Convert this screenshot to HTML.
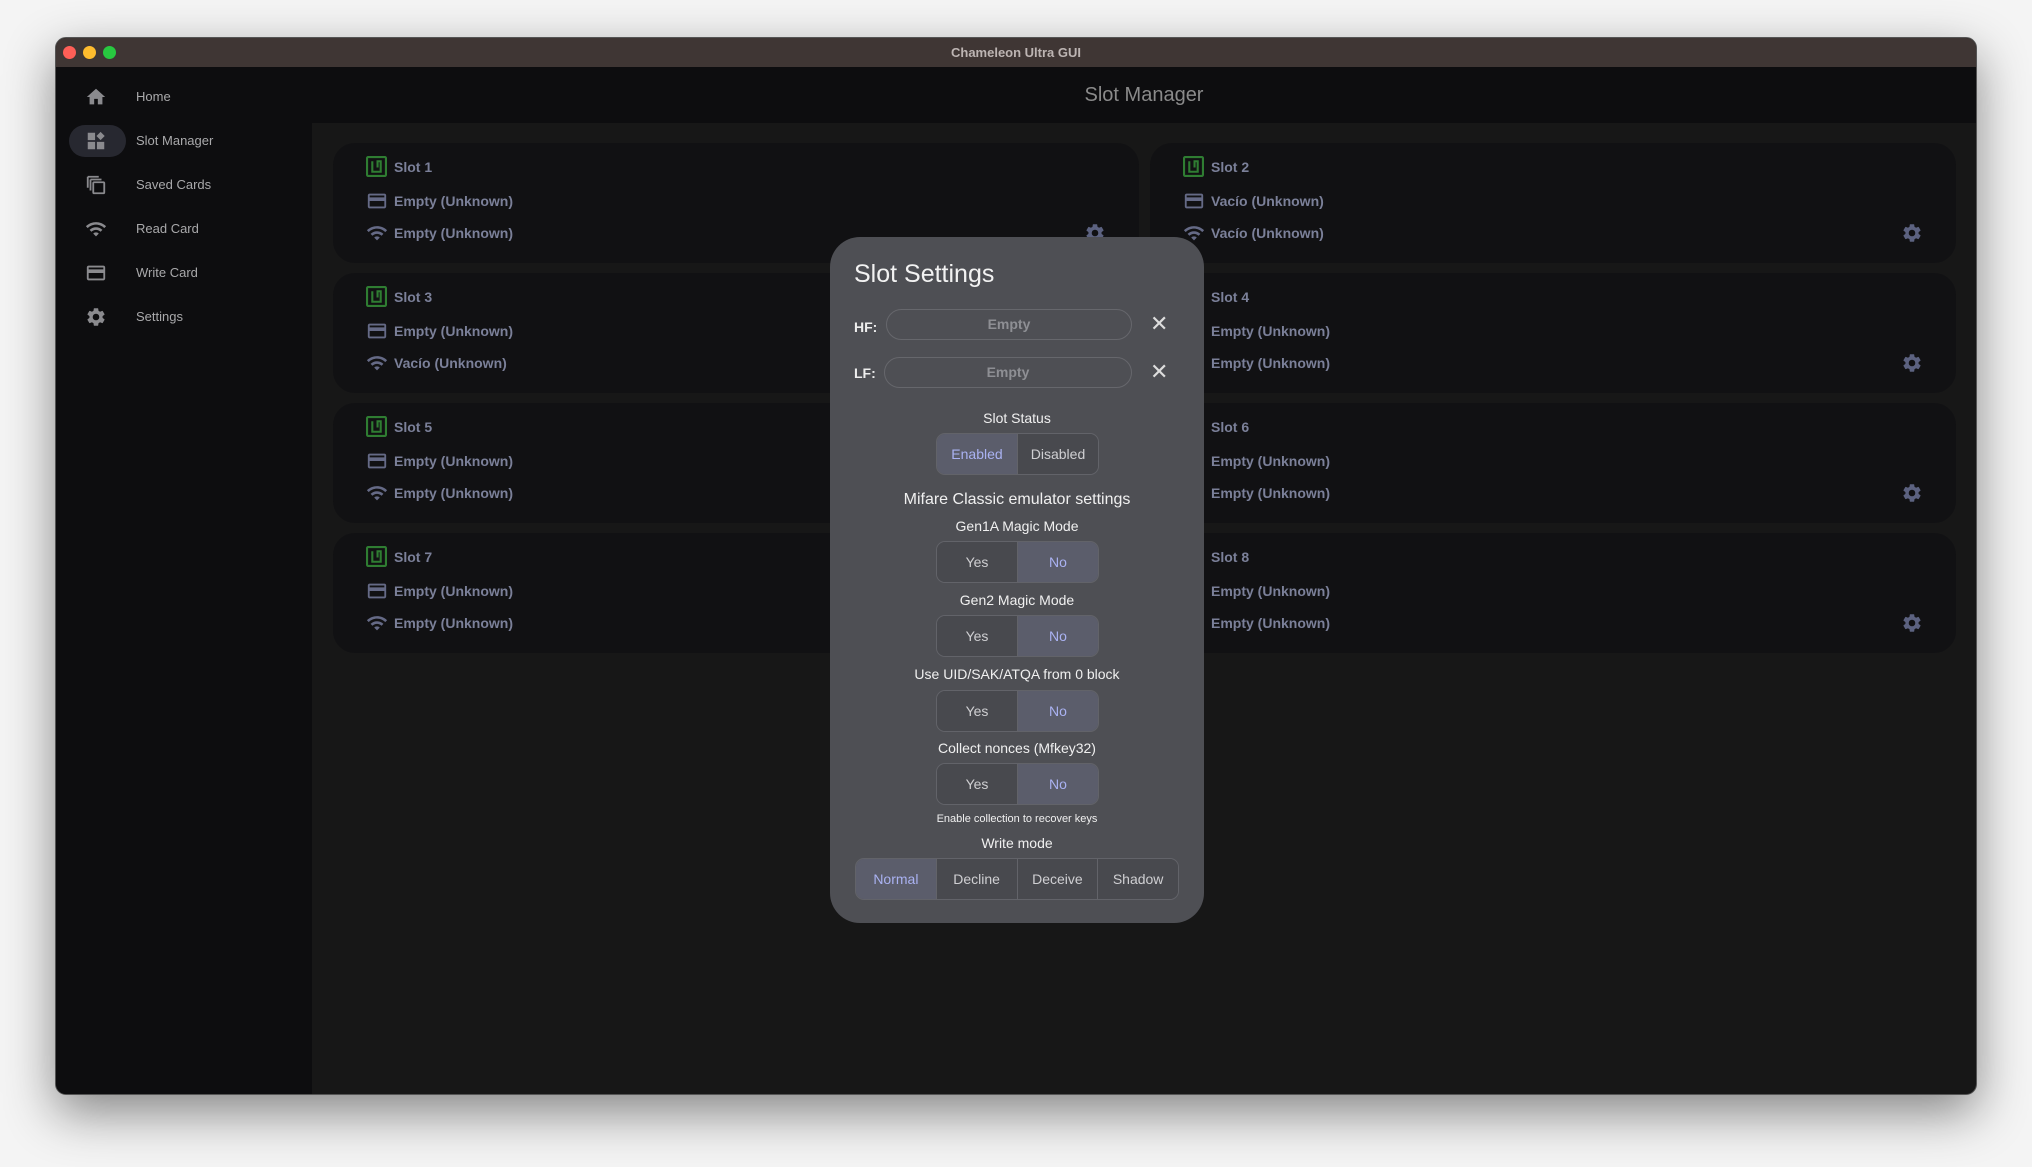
<!DOCTYPE html>
<html><head><meta charset="utf-8"><style>
*{box-sizing:border-box;margin:0;padding:0}
body{width:2032px;height:1167px;background:#f4f4f4;position:relative;overflow:hidden;font-family:"Liberation Sans",sans-serif}
.win{position:absolute;left:55px;top:37px;width:1922px;height:1058px;border-radius:11px;overflow:hidden;background:#171717;box-shadow:0 18px 50px rgba(0,0,0,.45);border:1px solid #555}
.tb{position:absolute;left:0;top:0;width:100%;height:29px;background:#3f3634;color:#bdb5b3;font-weight:bold;font-size:13px;text-align:center;line-height:29px}
.dot{position:absolute;top:8px;width:13px;height:13px;border-radius:50%}
.side{position:absolute;left:0;top:29px;width:256px;bottom:0;background:#0d0d0f}
.head{position:absolute;left:256px;top:29px;right:0;height:56px;background:#0d0d0f;color:#8a8a8a;font-size:20px;line-height:56px}
.head span{position:absolute;left:676px;width:312px;text-align:center;white-space:nowrap}
.ni{position:absolute;left:0;height:32px;width:256px}
.ni svg{position:absolute;left:29px;top:5px}
.ni span{position:absolute;left:80px;top:0;line-height:32px;font-size:13px;color:#a9a9ab}
.chip{position:absolute;left:13px;top:58px;width:57px;height:32px;border-radius:16px;background:#272830}
.card{position:absolute;width:806px;height:120px;background:#111113;border-radius:22px}
.card .r{position:absolute;left:34px;height:22px;color:#7b8099;font-size:14px;font-weight:bold;line-height:22px}
.card .r svg{position:absolute;left:-1px;top:0px}
.card .r span{position:absolute;left:27px;white-space:nowrap}
.gear{position:absolute;right:33px;top:79px}
.dlg{position:absolute;left:774px;top:199px;width:374px;height:686px;background:#4e4f54;border-radius:30px;color:#eee}
.t{position:absolute;left:0;width:100%;text-align:center;color:#f0f0f0;font-size:14px;line-height:16px}
.tg{position:absolute;display:flex;border:1px solid #626369;border-radius:9px;overflow:hidden;height:42px}
.tg div{flex:1;text-align:center;line-height:40px;font-size:14px;color:#cfcfd2;background:#48494e;border-right:1px solid #626369}
.tg div:last-child{border-right:none}
.tg .s{background:#5b5d6b;color:#aab2f2}
.inp{position:absolute;height:31px;border:1px solid #66676c;border-radius:16px;text-align:center;line-height:29px;color:#8e8f94;font-size:14px;font-weight:bold}
.x{position:absolute;left:320px;font-size:22px;color:#ddd;line-height:30px}
</style></head><body>
<div class="win">
<div class="tb">Chameleon Ultra GUI</div>
<div class="dot" style="left:7px;background:#fe5f57"></div>
<div class="dot" style="left:27px;background:#febc2e"></div>
<div class="dot" style="left:47px;background:#28c840"></div>
<div class="side">
<div class="chip"></div>
<div class="ni" style="top:14px"><svg width="22" height="22" viewBox="0 0 24 24"><path d="M10 20v-6h4v6h5v-8h3L12 3 2 12h3v8z" fill="#8a8a8e"/></svg><span>Home</span></div>
<div class="ni" style="top:58px"><svg width="22" height="22" viewBox="0 0 24 24"><path d="M3 3h8v8H3zM3 13h8v8H3zM13 13h8v8h-8zM17 2l4.5 4.5L17 11l-4.5-4.5z" fill="#8a8a8e"/></svg><span>Slot Manager</span></div>
<div class="ni" style="top:102px"><svg width="22" height="22" viewBox="0 0 24 24" fill="none" stroke="#8a8a8e" stroke-width="2"><path d="M3 3v12M3 3h12M6 6v12M6 6h12"/><rect x="9" y="9" width="12" height="12" rx="1"/></svg><span>Saved Cards</span></div>
<div class="ni" style="top:146px"><svg width="22" height="22" viewBox="0 0 24 24"><path d="M1 9l2 2c5-5 13-5 18 0l2-2C17 3 7 3 1 9zm4 4l2 2c2.8-2.8 7.2-2.8 10 0l2-2c-3.9-3.9-10.1-3.9-14 0zm4 4l3 3 3-3c-1.7-1.7-4.3-1.7-6 0z" fill="#8a8a8e"/></svg><span>Read Card</span></div>
<div class="ni" style="top:190px"><svg width="22" height="22" viewBox="0 0 24 24"><path d="M20 4H4c-1.1 0-2 .9-2 2v12c0 1.1.9 2 2 2h16c1.1 0 2-.9 2-2V6c0-1.1-.9-2-2-2zm0 14H4v-6h16v6zm0-10H4V6h16v2z" fill="#8a8a8e"/></svg><span>Write Card</span></div>
<div class="ni" style="top:234px"><svg width="22" height="22" viewBox="0 0 24 24"><path d="M19.14 12.94c.04-.3.06-.61.06-.94s-.02-.64-.07-.94l2.03-1.58a.49.49 0 00.12-.61l-1.920-3.32a.49.49 0 00-.59-.22l-2.39.96c-.5-.38-1.03-.7-1.62-.94l-.36-2.54a.48.48 0 00-.48-.41h-3.84c-.24 0-.43.17-.47.41l-.36 2.54c-.59.24-1.13.57-1.62.94l-2.39-.96a.48.48 0 00-.59.22L2.74 8.87c-.12.21-.08.47.12.61l2.03 1.58c-.05.3-.09.63-.09.94s.02.64.07.94l-2.03 1.58a.49.49 0 00-.12.61l1.92 3.32c.12.22.37.29.59.22l2.39-.96c.5.38 1.03.7 1.62.94l.36 2.54c.05.24.24.41.48.41h3.84c.24 0 .44-.17.47-.41l.36-2.54c.59-.24 1.13-.56 1.62-.94l2.39.96c.22.08.47 0 .59-.22l1.92-3.32c.12-.22.07-.47-.12-.61l-2.01-1.58zM12 15.6A3.6 3.6 0 1112 8.4a3.6 3.6 0 010 7.2z" fill="#8a8a8e"/></svg><span>Settings</span></div>
</div>
<div class="head"><span>Slot Manager</span></div>
<div id="cards"></div>
<div class="dlg">
<div style="position:absolute;left:24px;top:22px;font-size:25px;line-height:30px;color:#f2f2f2">Slot Settings</div>
<div style="position:absolute;left:24px;top:81px;font-size:14px;font-weight:bold;line-height:18px">HF:</div>
<div class="inp" style="left:56px;top:72px;width:246px">Empty</div>
<div class="x" style="top:72px">✕</div>
<div style="position:absolute;left:24px;top:127px;font-size:14px;font-weight:bold;line-height:18px">LF:</div>
<div class="inp" style="left:54px;top:120px;width:248px">Empty</div>
<div class="x" style="top:120px">✕</div>
<div class="t" style="top:173px">Slot Status</div>
<div class="tg" style="left:106px;top:196px;width:163px"><div class="s">Enabled</div><div>Disabled</div></div>
<div class="t" style="top:254px;font-size:16px;line-height:18px">Mifare Classic emulator settings</div>
<div class="t" style="top:281px">Gen1A Magic Mode</div>
<div class="tg" style="left:106px;top:304px;width:163px"><div>Yes</div><div class="s">No</div></div>
<div class="t" style="top:355px">Gen2 Magic Mode</div>
<div class="tg" style="left:106px;top:378px;width:163px"><div>Yes</div><div class="s">No</div></div>
<div class="t" style="top:429px">Use UID/SAK/ATQA from 0 block</div>
<div class="tg" style="left:106px;top:453px;width:163px"><div>Yes</div><div class="s">No</div></div>
<div class="t" style="top:503px">Collect nonces (Mfkey32)</div>
<div class="tg" style="left:106px;top:526px;width:163px"><div>Yes</div><div class="s">No</div></div>
<div class="t" style="top:576px;font-size:11px;line-height:13px">Enable collection to recover keys</div>
<div class="t" style="top:598px">Write mode</div>
<div class="tg" style="left:25px;top:621px;width:324px"><div class="s">Normal</div><div>Decline</div><div>Deceive</div><div>Shadow</div></div>
</div>
</div>
<script>
var nfc='<svg width="21" height="21" viewBox="0 0 20 20" fill="none" stroke="#2f7d32" stroke-width="2"><rect x="1" y="1" width="18" height="18" rx="1"/><path d="M6 5v10h8V5h-3v6"/></svg>';
var cardI='<svg width="22" height="22" viewBox="0 0 24 24"><path d="M20 4H4c-1.1 0-2 .9-2 2v12c0 1.1.9 2 2 2h16c1.1 0 2-.9 2-2V6c0-1.1-.9-2-2-2zm0 14H4v-6h16v6zm0-10H4V6h16v2z" fill="#656a86"/></svg>';
var wifi='<svg width="22" height="22" viewBox="0 0 24 24"><path d="M1 9l2 2c5-5 13-5 18 0l2-2C17 3 7 3 1 9zm4 4l2 2c2.8-2.8 7.2-2.8 10 0l2-2c-3.9-3.9-10.1-3.9-14 0zm4 4l3 3 3-3c-1.7-1.7-4.3-1.7-6 0z" fill="#656a86"/></svg>';
var gear='<svg class="gear" width="22" height="22" viewBox="0 0 24 24"><path d="M19.14 12.94c.04-.3.06-.61.06-.94s-.02-.64-.07-.94l2.03-1.58a.49.49 0 00.12-.61l-1.92-3.32a.49.49 0 00-.59-.22l-2.39.96c-.5-.38-1.03-.7-1.62-.94l-.36-2.54a.48.48 0 00-.48-.41h-3.84c-.24 0-.43.17-.47.41l-.36 2.54c-.59.24-1.13.57-1.62.94l-2.39-.96a.48.48 0 00-.59.22L2.74 8.87c-.12.21-.08.47.12.61l2.03 1.58c-.05.3-.09.63-.09.94s.02.64.07.94l-2.03 1.58a.49.49 0 00-.12.61l1.92 3.32c.12.22.37.29.59.22l2.39-.96c.5.38 1.03.7 1.62.94l.36 2.54c.05.24.24.41.48.41h3.84c.24 0 .44-.17.47-.41l.36-2.54c.59-.24 1.13-.56 1.62-.94l2.39.96c.22.08.47 0 .59-.22l1.92-3.32c.12-.22.07-.47-.12-.61l-2.01-1.58zM12 15.6A3.6 3.6 0 1112 8.4a3.6 3.6 0 010 7.2z" fill="#5c6280"/></svg>';
var d=[["Empty","Empty"],["Vacío","Vacío"],["Empty","Vacío"],["Empty","Empty"],["Empty","Empty"],["Empty","Empty"],["Empty","Empty"],["Empty","Empty"]];
var h='';
for(var i=0;i<8;i++){var col=i%2,row=Math.floor(i/2);
var x=(col?1149:332)-55,y=142-37+row*130;
h+='<div class="card" style="left:'+x+'px;top:'+y+'px">'+
'<div class="r" style="top:13px">'+nfc+'<span>Slot '+(i+1)+'</span></div>'+
'<div class="r" style="top:47px">'+cardI+'<span>'+d[i][0]+' (Unknown)</span></div>'+
'<div class="r" style="top:79px">'+wifi+'<span>'+d[i][1]+' (Unknown)</span></div>'+gear+'</div>';}
document.getElementById('cards').innerHTML=h;
</script>
</body></html>
